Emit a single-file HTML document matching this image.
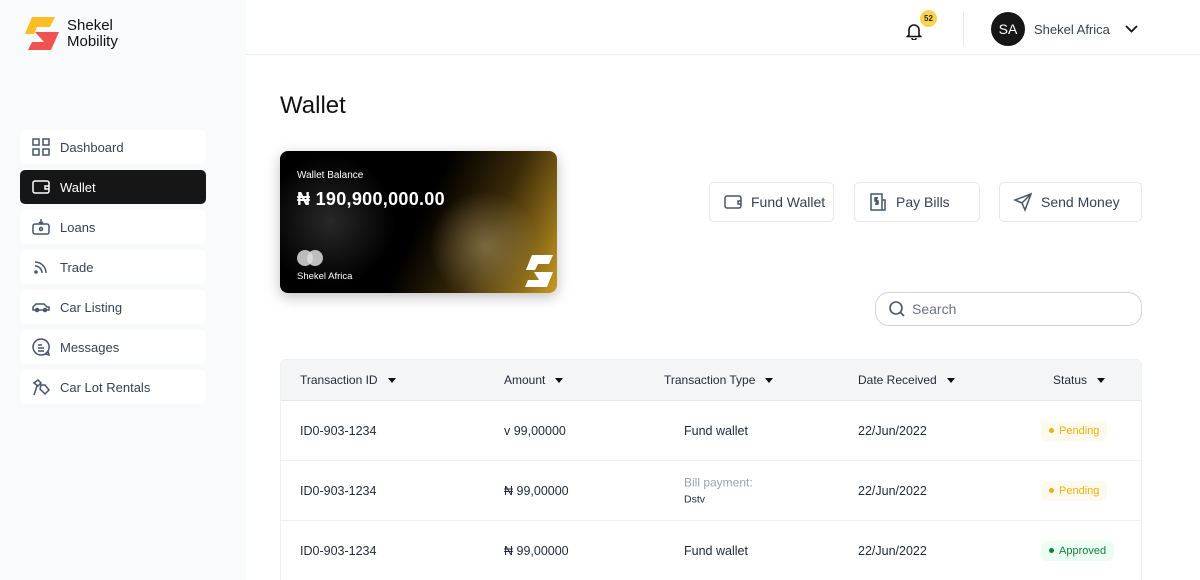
<!DOCTYPE html>
<html><head><meta charset="utf-8"><style>
*{margin:0;padding:0;box-sizing:border-box}
html,body{width:1200px;height:580px;overflow:hidden}
body{font-family:"Liberation Sans",sans-serif;background:#fff;position:relative;color:#1f2937}
.side{position:absolute;left:0;top:0;width:246px;height:580px;background:#f9fafb}
.logo{position:absolute;left:24px;top:16px}
.logotxt{position:absolute;left:67px;top:18px;font-size:15px;line-height:16px;color:#111}
.nav{position:absolute;left:20px;width:186px;height:34px;background:#fff;border-radius:5px;display:flex;align-items:center;padding-left:11px;font-size:13px;color:#374151}
.nav svg{width:20px;height:20px;margin-right:9px;fill:none;stroke:#475569;stroke-width:1.5}
.nav.act{background:#161616;color:#fff}
.nav.act svg{stroke:#fff}
.hdr{position:absolute;left:246px;top:0;right:0;height:55px;border-bottom:1px solid #eceef1;background:#fff}
h1{position:absolute;left:280px;top:92px;font-size:24px;font-weight:500;color:#111}
.card{position:absolute;left:280px;top:151px;width:277px;height:142px;border-radius:8px;overflow:hidden;box-shadow:0 4px 14px rgba(0,0,0,.25);
background:radial-gradient(circle at 205px 95px,rgba(150,130,85,.7),transparent 55px),radial-gradient(circle at 50px 70px,rgba(80,80,80,.5),transparent 65px),linear-gradient(115deg,#000 50%,#3a2a08 72%,#c79a22 100%);color:#fff}
.btn{position:absolute;top:182px;height:40px;border:1px solid #e5e7eb;border-radius:5px;display:flex;align-items:center;padding-left:13px;font-size:14px;color:#374151}
.btn svg{width:20px;height:20px;margin-right:8px;fill:none;stroke:#475569;stroke-width:1.5}
.search{position:absolute;left:875px;top:292px;width:267px;height:34px;border:1px solid #d1d5db;border-radius:14px;display:flex;align-items:center;padding-left:12px;font-size:14px;color:#6b7280}
.tbl{position:absolute;left:280px;top:359px;width:862px;height:230px;border:1px solid #eef0f3;border-radius:6px;overflow:hidden}
.th{height:41px;background:#f4f5f7;border-bottom:1px solid #e5e7eb;position:relative;font-size:12px;color:#1f2937}
.row{height:60px;border-bottom:1px solid #eef0f3;position:relative;font-size:12.5px;color:#1f2937}
.c{position:absolute;top:50%;transform:translateY(-50%);white-space:nowrap}
.tri{display:inline-block;width:0;height:0;border-left:4px solid transparent;border-right:4px solid transparent;border-top:5px solid #111;margin-left:10px;vertical-align:middle}
.pill{position:absolute;top:50%;transform:translateY(-50%);font-size:11px;padding:4px 8px;border-radius:6px}
.pend{background:#fef9ee;color:#eab308}
.appr{background:#ecfdf3;color:#15803d}
.dot{display:inline-block;width:5px;height:5px;border-radius:50%;background:currentColor;margin-right:5px;vertical-align:middle}
</style></head><body>
<div class="side">
<svg class="logo" width="36" height="36" viewBox="0 0 36 36"><path d="M8 1h23l-5 10H13l-3 7H1z" fill="#fbbf24"/><path d="M11 16h24l-8 18H4l4-8h12z" fill="#f05252"/></svg>
<div class="logotxt">Shekel<br>Mobility</div>
<div class="nav" style="top:130px"><svg viewBox="0 0 20 20"><rect x="2" y="2" width="6" height="6"/><rect x="12" y="2" width="6" height="6"/><rect x="2" y="12" width="6" height="6"/><rect x="12" y="12" width="6" height="6"/></svg>Dashboard</div>
<div class="nav act" style="top:170px"><svg viewBox="0 0 20 20"><rect x="2" y="4" width="16" height="12" rx="2"/><path d="M18 9h-4v3h4"/></svg>Wallet</div>
<div class="nav" style="top:210px"><svg viewBox="0 0 20 20"><rect x="2" y="7" width="16" height="10" rx="2"/><circle cx="10" cy="12" r="1.5"/><path d="M10 2v5M8 5l2 2 2-2"/></svg>Loans</div>
<div class="nav" style="top:250px"><svg viewBox="0 0 20 20"><path d="M4 9a7 7 0 0 1 7 7M4 5a11 11 0 0 1 11 11"/><circle cx="5" cy="15" r="1" fill="#475569"/></svg>Trade</div>
<div class="nav" style="top:290px"><svg viewBox="0 0 20 20"><path d="M2 13v-3l3-3h8l3 3h2v3z"/><circle cx="6" cy="13" r="1.5"/><circle cx="14" cy="13" r="1.5"/></svg>Car Listing</div>
<div class="nav" style="top:330px"><svg viewBox="0 0 20 20"><path d="M10 2a8 8 0 1 0 7 12l1 4-4-1A8 8 0 0 0 10 2z"/><path d="M7 8h4M7 11h6M7 14h6"/></svg>Messages</div>
<div class="nav" style="top:370px"><svg viewBox="0 0 20 20"><path d="M3 6l4-3 3 3-3 3zM6 9l-3 9M10 8l4 0 4 5-4 4-5-5z"/></svg>Car Lot Rentals</div>
</div>
<div class="hdr">
<svg style="position:absolute;left:660px;top:22px" width="16" height="18" viewBox="0 0 16 18" fill="none" stroke="#111" stroke-width="1.6"><path d="M3 13V8a5 5 0 0 1 10 0v5l1.5 1.5h-13zM6 16a2 2 0 0 0 4 0"/></svg>
<div style="position:absolute;left:674px;top:10px;width:17px;height:17px;border-radius:50%;background:#fcd34d;font-size:8px;font-weight:700;display:flex;align-items:center;justify-content:center">52</div>
<div style="position:absolute;left:717px;top:12px;width:1px;height:34px;background:#e5e7eb"></div>
<div style="position:absolute;left:745px;top:12px;width:34px;height:34px;border-radius:50%;background:#161616;color:#fff;font-size:14px;display:flex;align-items:center;justify-content:center">SA</div>
<div style="position:absolute;left:788px;top:22px;font-size:13px;color:#374151">Shekel Africa</div>
<svg style="position:absolute;left:878px;top:24px" width="15" height="10" viewBox="0 0 15 10" fill="none" stroke="#111" stroke-width="1.8"><path d="M2 2l5.5 5.5L13 2"/></svg>
</div>
<h1>Wallet</h1>
<div class="card">
<div style="position:absolute;left:17px;top:19px;font-size:10px">Wallet Balance</div>
<div style="position:absolute;left:17px;top:38px;font-size:18px;font-weight:600;letter-spacing:.3px">₦ 190,900,000.00</div>
<div style="position:absolute;left:17px;top:99px;width:16px;height:16px;border-radius:50%;background:#bbb"></div>
<div style="position:absolute;left:27px;top:99px;width:16px;height:16px;border-radius:50%;background:#ddd;opacity:.85"></div>
<div style="position:absolute;left:17px;top:120px;font-size:9.5px">Shekel Africa</div>
<svg style="position:absolute;left:244px;top:104px" width="30" height="32" viewBox="0 0 30 32"><path d="M8 0h21l-4 9H14l-3 6H2z" fill="#fff"/><path d="M10 17h19l-6 15H1l3-7h11z" fill="#fff"/></svg>
</div>
<div class="btn" style="left:709px;width:125px"><svg viewBox="0 0 20 20"><rect x="2" y="4" width="16" height="12" rx="2"/><path d="M18 9h-3v3h3"/></svg>Fund Wallet</div>
<div class="btn" style="left:854px;width:126px"><svg viewBox="0 0 20 20"><path d="M3 2h11v16H3zM14 8h3v10h-3"/><path d="M10 6H7v3h3v3H7M8.5 5v8"/></svg>Pay Bills</div>
<div class="btn" style="left:999px;width:143px"><svg viewBox="0 0 20 20"><path d="M18 2L2 8l7 3 3 7z M9 11l9-9"/></svg>Send Money</div>
<div class="search"><svg width="18" height="18" viewBox="0 0 18 18" fill="none" stroke="#475569" stroke-width="1.6" style="margin-right:6px"><circle cx="8" cy="8" r="6"/><path d="M12.5 12.5L16 16"/></svg>Search</div>
<div class="tbl">
<div class="th"><span class="c" style="left:19px">Transaction ID<i class="tri"></i></span><span class="c" style="left:223px">Amount<i class="tri"></i></span><span class="c" style="left:383px">Transaction Type<i class="tri"></i></span><span class="c" style="left:577px">Date Received<i class="tri"></i></span><span class="c" style="left:772px">Status<i class="tri"></i></span></div>
<div class="row"><span class="c" style="left:19px">ID0-903-1234</span><span class="c" style="left:223px">v 99,00000</span><span class="c" style="left:403px">Fund wallet</span><span class="c" style="left:577px">22/Jun/2022</span><span class="pill pend" style="left:760px"><i class="dot"></i>Pending</span></div>
<div class="row"><span class="c" style="left:19px">ID0-903-1234</span><span class="c" style="left:223px">₦ 99,00000</span><span class="c" style="left:403px;font-size:12px;line-height:16px"><span style="color:#9ca3af">Bill payment:</span><br><span style="font-size:10.5px">Dstv</span></span><span class="c" style="left:577px">22/Jun/2022</span><span class="pill pend" style="left:760px"><i class="dot"></i>Pending</span></div>
<div class="row"><span class="c" style="left:19px">ID0-903-1234</span><span class="c" style="left:223px">₦ 99,00000</span><span class="c" style="left:403px">Fund wallet</span><span class="c" style="left:577px">22/Jun/2022</span><span class="pill appr" style="left:760px"><i class="dot"></i>Approved</span></div>
</div>
</body></html>
